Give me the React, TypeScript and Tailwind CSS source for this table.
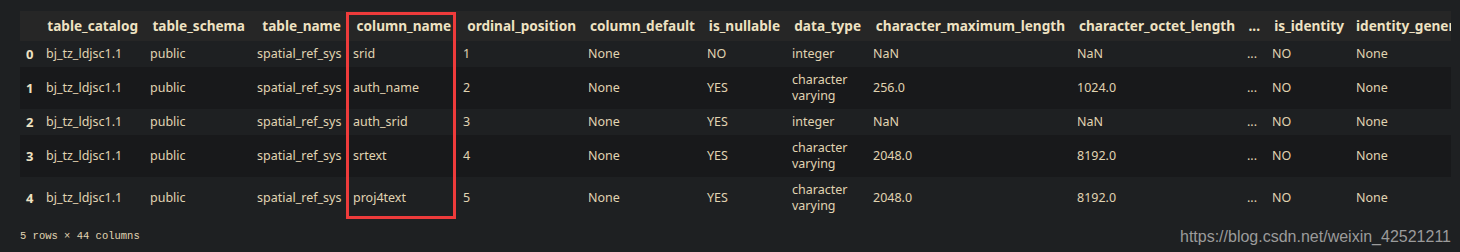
import React from "react";

type Col = { key: string; width: number };

const columns: Col[] = [
  { key: "", width: 20 },
  { key: "table_catalog", width: 104 },
  { key: "table_schema", width: 107 },
  { key: "table_name", width: 96 },
  { key: "column_name", width: 110 },
  { key: "ordinal_position", width: 125 },
  { key: "column_default", width: 119 },
  { key: "is_nullable", width: 85 },
  { key: "data_type", width: 81 },
  { key: "character_maximum_length", width: 204 },
  { key: "character_octet_length", width: 170 },
  { key: "...", width: 25 },
  { key: "is_identity", width: 84 },
  { key: "identity_generation", width: 150 },
];

const rows: string[][] = [
  ["0", "bj_tz_ldjsc1.1", "public", "spatial_ref_sys", "srid", "1", "None", "NO", "integer", "NaN", "NaN", "...", "NO", "None"],
  ["1", "bj_tz_ldjsc1.1", "public", "spatial_ref_sys", "auth_name", "2", "None", "YES", "character varying", "256.0", "1024.0", "...", "NO", "None"],
  ["2", "bj_tz_ldjsc1.1", "public", "spatial_ref_sys", "auth_srid", "3", "None", "YES", "integer", "NaN", "NaN", "...", "NO", "None"],
  ["3", "bj_tz_ldjsc1.1", "public", "spatial_ref_sys", "srtext", "4", "None", "YES", "character varying", "2048.0", "8192.0", "...", "NO", "None"],
  ["4", "bj_tz_ldjsc1.1", "public", "spatial_ref_sys", "proj4text", "5", "None", "YES", "character varying", "2048.0", "8192.0", "...", "NO", "None"],
];

const DataFrame: React.FC = () => {
  return (
    <div className="relative w-[1431px] overflow-hidden">
      <table className="table-fixed border-collapse w-[1480px] leading-4">
        <colgroup>
          {columns.map((c, i) => (
            <col key={i} style={{ width: c.width }} />
          ))}
        </colgroup>
        <thead>
          <tr className="bg-[#262626] h-[30px]">
            {columns.map((c, i) => (
              <th
                key={i}
                className={
                  i === columns.length - 1
                    ? "px-[6px] text-left text-[13.6px] font-bold whitespace-nowrap overflow-hidden text-[#eee2c2]"
                    : "px-[6px] text-right text-[13.6px] font-bold whitespace-nowrap overflow-hidden text-[#eee2c2]"
                }
              >
                {c.key}
              </th>
            ))}
          </tr>
        </thead>
        <tbody>
          {rows.map((r, ri) => (
            <tr
              key={ri}
              className={ri % 2 === 1 ? "bg-[#18191b]" : "bg-[#1e2022]"}
            >
              {r.map((v, ci) =>
                ci === 0 ? (
                  <th
                    key={ci}
                    className="px-[6px] py-[5px] text-left text-[13px] font-bold text-[#eee2c2]"
                  >
                    {v}
                  </th>
                ) : (
                  <td
                    key={ci}
                    className={
                      ci === 8
                        ? "px-[6px] py-[5px] text-left text-[12.5px] text-[#e0d4b2]"
                        : "px-[6px] py-[5px] text-left text-[12.5px] whitespace-nowrap overflow-hidden text-[#e0d4b2]"
                    }
                  >
                    {v}
                  </td>
                )
              )}
            </tr>
          ))}
        </tbody>
      </table>
      {/* red annotation box around column_name */}
      <div className="absolute left-[326px] top-px w-[110px] h-[207px] border-[3px] border-[#ee3b3b] pointer-events-none" />
    </div>
  );
};

export default function App() {
  return (
    <div className="w-[1460px] h-[252px] bg-[#1e2022] pt-[11px] pl-5 font-['Noto_Sans',sans-serif]">
      <DataFrame />
      <div className="flex items-center justify-between w-[1431px] mt-[6px]">
        <span className="font-['Liberation_Mono',monospace] text-[10.5px] text-[#e0d4b2]">
          5 rows × 44 columns
        </span>
        <span className="font-['Liberation_Sans',Arial,sans-serif] text-[16px] text-[#9b9b9b]">
          https://blog.csdn.net/weixin_42521211
        </span>
      </div>
    </div>
  );
}
